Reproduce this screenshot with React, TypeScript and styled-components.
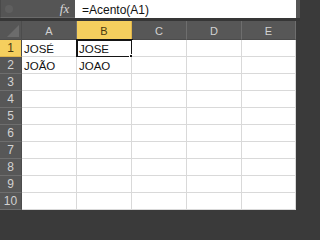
import React from "react";
import styled, { createGlobalStyle } from "styled-components";

const Global = createGlobalStyle`
  html, body { margin: 0; padding: 0; background: #3a3a3a; }
  body { width: 300px; height: 216px; overflow: hidden; }
`;

const Window = styled.div`
  width: 300px;
  height: 216px;
  background: #3a3a3a;
  display: flex;
  flex-direction: column;
  overflow: hidden;
  font-family: "Liberation Sans", Arial, sans-serif;
`;

const FormulaBar = styled.div`
  display: flex;
  height: 18px;
  padding-right: 4px;
  border-bottom: 3px solid #363636;
  background: #555555;
`;

const NameBox = styled.div`
  width: 52px;
  box-sizing: border-box;
  border-bottom: 1px solid #6a6a6a;
  border-left: 1px solid #4a4a4a;
  display: flex;
  align-items: center;
  padding-left: 4px;
`;

const NameKnob = styled.div`
  width: 8px;
  height: 8px;
  border-radius: 50%;
  background: #5f5f5f;
`;

const FxButton = styled.div`
  width: 23px;
  box-sizing: border-box;
  border-bottom: 1px solid #6a6a6a;
  display: flex;
  align-items: center;
  justify-content: center;
  color: #d8d8d8;
  font-family: "Liberation Serif", "Times New Roman", serif;
  font-style: italic;
  font-size: 13px;
  padding-left: 2px;
`;

const FormulaInput = styled.div`
  flex: 1;
  background: #ffffff;
  color: #111111;
  font-size: 12px;
  padding-left: 7px;
  display: flex;
  align-items: center;
  padding-top: 1px;
`;

const Sheet = styled.div`
  display: grid;
  grid-template-columns: 22px 55px 55px 55px 55px 54px;
  grid-template-rows: 19px repeat(10, 17px);
`;

const Corner = styled.div`
  background: #565656;
  border-right: 1px solid #4c4c4c;
  border-bottom: 1px solid #4c4c4c;
  display: flex;
  align-items: flex-end;
  justify-content: flex-end;
  padding: 0 2px 2px 0;
`;

const ColHeader = styled.div<{ $active?: boolean }>`
  background: ${(p) => (p.$active ? "#f5cf5e" : "#575757")};
  color: ${(p) => (p.$active ? "#4a3a10" : "#d2d2d2")};
  border-right: 1px solid ${(p) => (p.$active ? "#e0b44a" : "#6e6e6e")};
  border-bottom: 1px solid #4c4c4c;
  display: flex;
  align-items: center;
  justify-content: center;
  font-size: 11px;
  padding-top: 1px;
`;

const RowHeader = styled.div<{ $active?: boolean }>`
  background: ${(p) => (p.$active ? "#f5cf5e" : "#575757")};
  color: ${(p) => (p.$active ? "#4a3a10" : "#d2d2d2")};
  border-right: 1px solid #4c4c4c;
  border-bottom: 1px solid ${(p) => (p.$active ? "#e0b44a" : "#6e6e6e")};
  display: flex;
  align-items: center;
  justify-content: center;
  font-size: 12px;
`;

const Cell = styled.div`
  position: relative;
  background: #ffffff;
  border-right: 1px solid #d9d9d9;
  border-bottom: 1px solid #d9d9d9;
  color: #111111;
  font-size: 11.5px;
  display: flex;
  align-items: flex-end;
  padding: 0 0 1px 2px;
  white-space: nowrap;
`;

const Selection = styled.div`
  position: absolute;
  left: -1px;
  top: -1px;
  right: -2px;
  bottom: -2px;
  border: 2px solid #151515;
  pointer-events: none;
`;

const FillHandle = styled.div`
  position: absolute;
  right: -4px;
  bottom: -4px;
  width: 4px;
  height: 4px;
  background: #151515;
  border: 1px solid #ffffff;
`;

const cols = ["A", "B", "C", "D", "E"];
const data: Record<string, string> = {
  A1: "JOSÉ",
  B1: "JOSE",
  A2: "JOÃO",
  B2: "JOAO",
};

export default function App() {
  const rows = Array.from({ length: 10 }, (_, i) => i + 1);
  return (
    <>
      <Global />
      <Window>
        <FormulaBar>
          <NameBox>
            <NameKnob />
          </NameBox>
          <FxButton>fx</FxButton>
          <FormulaInput>=Acento(A1)</FormulaInput>
        </FormulaBar>
        <Sheet>
          <Corner>
            <svg width="12" height="12" viewBox="0 0 12 12">
              <polygon points="12,0 12,12 0,12" fill="#6c6c6c" />
            </svg>
          </Corner>
          {cols.map((c) => (
            <ColHeader key={c} $active={c === "B"}>
              {c}
            </ColHeader>
          ))}
          {rows.map((r) => (
            <React.Fragment key={r}>
              <RowHeader $active={r === 1}>{r}</RowHeader>
              {cols.map((c) => {
                const id = `${c}${r}`;
                return (
                  <Cell key={id}>
                    {data[id] ?? ""}
                    {id === "B1" && (
                      <Selection>
                        <FillHandle />
                      </Selection>
                    )}
                  </Cell>
                );
              })}
            </React.Fragment>
          ))}
        </Sheet>
      </Window>
    </>
  );
}
